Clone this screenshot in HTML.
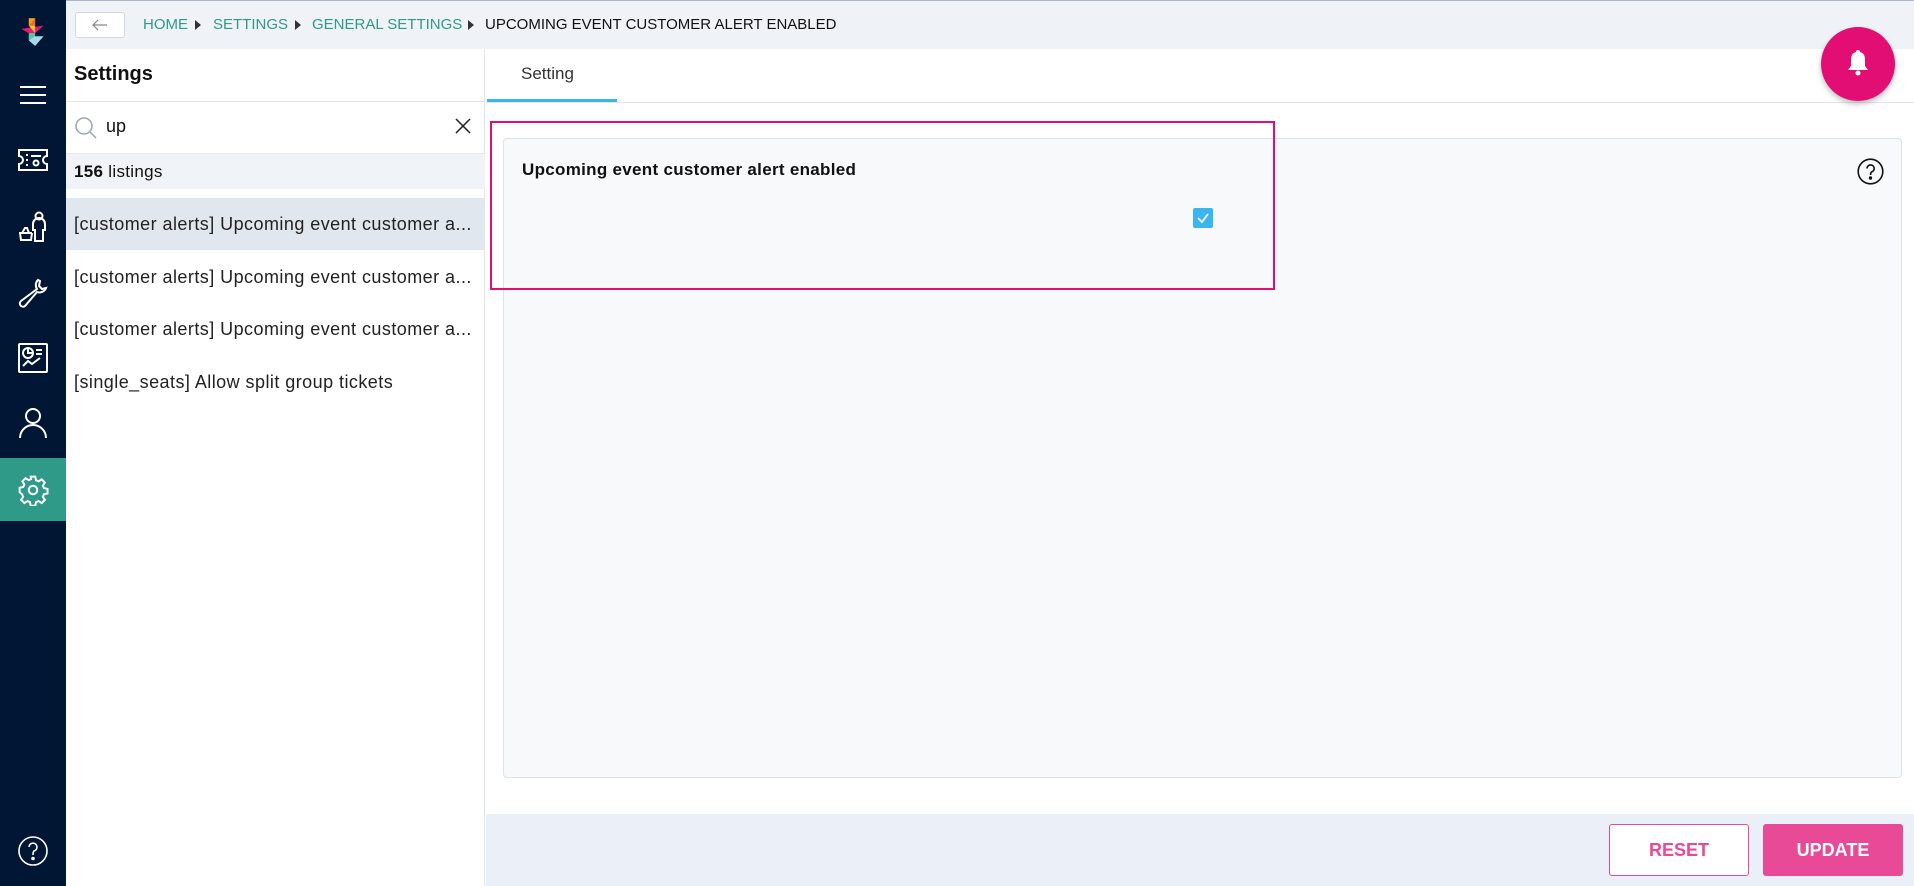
<!DOCTYPE html>
<html><head><meta charset="utf-8"><style>
*{box-sizing:border-box;margin:0;padding:0}
html,body{width:1914px;height:886px;overflow:hidden;background:#fff;font-family:"Liberation Sans",sans-serif;color:#111}
.abs{position:absolute}
#side{left:0;top:0;width:66px;height:886px;background:#011535}
#top{left:66px;top:0;width:1848px;height:49px;background:#eff3f8;border-top:1px solid #a9b6cc}
.crumb{font-size:15px;color:#2e9a87;top:15px}
#left{left:66px;top:49px;width:419px;height:837px;background:#fff;border-right:1px solid #e3e7ee}
.row{position:absolute;left:0;width:419px;height:52px;font-size:18px;letter-spacing:0.45px;line-height:52px;padding-left:8px;color:#222;white-space:nowrap}
svg{position:absolute}
</style></head><body>
<div id="side" class="abs">
<svg style="left:20px;top:15px" width="26" height="34" viewBox="0 0 24 32">
<polygon points="8,3 14,3 14,10 8,10" fill="#f7a21b"/><polygon points="14,3 14,10 8,10" fill="#f26b2a"/>
<polygon points="1,13 22,10 14,17 8,17" fill="#e8196f"/><polygon points="8,10 14,10 14,17" fill="#f7c02e"/>
<polygon points="8,17 14,17 14,24 8,24" fill="#5fc3a9"/><polygon points="14,20 22,20 14,29 8,24" fill="#a3d9e8"/>
</svg>
<svg style="left:19px;top:85px" width="28" height="20" viewBox="0 0 28 20" stroke="#fff" stroke-width="2"><path d="M1 2H27M1 10H27M1 18H27"/></svg>
<svg style="left:17px;top:148px" width="32" height="24" viewBox="0 0 32 24" fill="none" stroke="#fff" stroke-width="2"><path d="M2 2H30V8A4 4 0 0 0 30 16V22H2V16A4 4 0 0 0 2 8Z"/><path d="M10 6V8M10 11V13M10 16V18M14 8H24"/><circle cx="19" cy="15" r="2.5"/></svg>
<svg style="left:17px;top:211px" width="32" height="32" viewBox="0 0 32 32" fill="none" stroke="#fff" stroke-width="2"><circle cx="22" cy="5" r="3.5"/><path d="M16 19V13A6 6 0 0 1 28 13V19H26V30H18V19Z"/><path d="M2 22H15M3 22L4 29H14L15 22M5 22L8 17H10L12 22"/></svg>
<svg style="left:17px;top:277px" width="32" height="32" viewBox="0 0 32 32" fill="none" stroke="#fff" stroke-width="2"><path d="M21 3A7 7 0 0 0 20 12L4 24A3 3 0 0 0 8 29L20 15A7 7 0 0 0 29 11L25 12L22 9L23 4Z"/></svg>
<svg style="left:18px;top:343px" width="30" height="30" viewBox="0 0 30 30" fill="none" stroke="#fff" stroke-width="2"><rect x="1" y="1" width="28" height="28" rx="1"/><circle cx="10" cy="10" r="5"/><path d="M10 5V10H15M18 7H24M18 11H24M5 23L10 18L14 21L22 15"/></svg>
<svg style="left:18px;top:407px" width="30" height="32" viewBox="0 0 30 32" fill="none" stroke="#fff" stroke-width="2"><circle cx="15" cy="9" r="7"/><path d="M2 31A13 13 0 0 1 28 31"/></svg>
<div class="abs" style="left:0;top:458px;width:66px;height:63px;background:#2e9a87"></div>
<svg style="left:17px;top:474px" width="32" height="32" viewBox="0 0 24 24" fill="none" stroke="#fff" stroke-width="1.5"><circle cx="12" cy="12" r="3.2"/><path d="M10.3 2h3.4l.6 2.7 1.9.8 2.3-1.5 2.4 2.4-1.5 2.3.8 1.9 2.7.6v3.4l-2.7.6-.8 1.9 1.5 2.3-2.4 2.4-2.3-1.5-1.9.8-.6 2.7h-3.4l-.6-2.7-1.9-.8-2.3 1.5-2.4-2.4 1.5-2.3-.8-1.9L2 13.7v-3.4l2.7-.6.8-1.9L4 5.5l2.4-2.4 2.3 1.5 1.9-.8z"/></svg>
<svg style="left:18px;top:836px" width="30" height="30" viewBox="0 0 30 30" fill="none" stroke="#fff" stroke-width="1.6"><circle cx="15" cy="15" r="14"/><path d="M11 11A4 4 0 1 1 16 15C15 16 15 17 15 19"/><circle cx="15" cy="22.5" r="1" fill="#fff"/></svg>
</div>
<div id="top" class="abs">
<div class="abs" style="left:9px;top:11px;width:50px;height:26px;background:#fff;border:1px solid #d3d9e2;border-radius:3px"></div>
<svg style="left:26px;top:18px" width="16" height="12" viewBox="0 0 16 12" fill="none" stroke="#888" stroke-width="1.2"><path d="M15 6H1M6 1L1 6L6 11"/></svg>
<div class="abs crumb" style="left:77px">HOME</div>
<svg style="left:129px;top:19px" width="6" height="10"><path d="M0 0L6 5L0 10Z" fill="#333"/></svg>
<div class="abs crumb" style="left:147px">SETTINGS</div>
<svg style="left:229px;top:19px" width="6" height="10"><path d="M0 0L6 5L0 10Z" fill="#333"/></svg>
<div class="abs crumb" style="left:246px">GENERAL SETTINGS</div>
<svg style="left:402px;top:19px" width="6" height="10"><path d="M0 0L6 5L0 10Z" fill="#333"/></svg>
<div class="abs crumb" style="left:419px;color:#111">UPCOMING EVENT CUSTOMER ALERT ENABLED</div>
</div>
<div id="left" class="abs">
<div class="abs" style="left:8px;top:14px;font-size:20px;font-weight:bold">Settings</div>
<div class="abs" style="left:0;top:52px;width:419px;height:1px;background:#e3e7ee"></div>
<svg style="left:8px;top:67px" width="24" height="24" viewBox="0 0 24 24" fill="none" stroke="#9aa6b6" stroke-width="1.5"><circle cx="10" cy="10" r="8"/><path d="M16 16L22 22"/></svg>
<div class="abs" style="left:40px;top:67px;font-size:18px">up</div>
<svg style="left:389px;top:69px" width="16" height="16" viewBox="0 0 16 16" stroke="#222" stroke-width="1.5"><path d="M1 1L15 15M15 1L1 15"/></svg>
<div class="abs" style="left:0;top:104px;width:419px;height:36px;background:#f0f3f7;border-top:1px solid #e3e7ee;font-size:17px;letter-spacing:0.3px;line-height:36px;padding-left:8px"><b>156</b> listings</div>
<div class="row" style="top:149px;background:#e1e7ef">[customer alerts] Upcoming event customer a...</div>
<div class="row" style="top:202px">[customer alerts] Upcoming event customer a...</div>
<div class="row" style="top:254px">[customer alerts] Upcoming event customer a...</div>
<div class="row" style="top:307px">[single_seats] Allow split group tickets</div>
</div>
<div class="abs" style="left:486px;top:102px;width:1428px;height:1px;background:#e3e7ee"></div>
<div class="abs" style="left:521px;top:64px;font-size:17px;color:#333">Setting</div>
<div class="abs" style="left:487px;top:99px;width:130px;height:3px;background:#3bb5ee"></div>
<div class="abs" style="left:503px;top:138px;width:1399px;height:640px;background:#f8f9fb;border:1px solid #dde3ea;border-radius:4px"></div>
<div class="abs" style="left:490px;top:121px;width:785px;height:169px;border:2.5px solid #e20e73"></div>
<div class="abs" style="left:522px;top:160px;font-size:17px;letter-spacing:0.3px;font-weight:bold;color:#111">Upcoming event customer alert enabled</div>
<div class="abs" style="left:1193px;top:208px;width:20px;height:20px;background:#3bb5ee;border-radius:2px"></div>
<svg style="left:1196px;top:211px" width="14" height="14" viewBox="0 0 14 14" fill="none" stroke="#fff" stroke-width="1.8"><path d="M2 7L6 11L12 3"/></svg>
<svg style="left:1857px;top:158px" width="27" height="27" viewBox="0 0 27 27" fill="none" stroke="#111" stroke-width="1.6"><circle cx="13.5" cy="13.5" r="12.3"/><path d="M10 10.5A3.6 3.6 0 1 1 14.5 14C13.8 14.7 13.5 15.5 13.5 17"/><circle cx="13.5" cy="20" r="0.9" fill="#111"/></svg>
<div class="abs" style="left:1821px;top:27px;width:74px;height:74px;border-radius:50%;background:#e20e73;box-shadow:0 3px 6px rgba(0,0,0,.25)"></div>
<svg style="left:1845px;top:49px" width="26" height="28" viewBox="0 0 26 28" fill="#fff"><path d="M13 1C11.5 1 11 2 11 3C7 4 6 7 6 11V17L3 21H23L20 17V11C20 7 19 4 15 3C15 2 14.5 1 13 1Z"/><circle cx="13" cy="24" r="2.5"/></svg>
<div class="abs" style="left:486px;top:814px;width:1428px;height:72px;background:#ebeff7"></div>
<div class="abs" style="left:1609px;top:824px;width:140px;height:52px;background:#fff;border:1px solid #e94a97;border-radius:3px;color:#e94a97;font-weight:bold;font-size:18px;text-align:center;line-height:50px">RESET</div>
<div class="abs" style="left:1763px;top:824px;width:140px;height:52px;background:#e94a97;border-radius:3px;color:#fff;font-weight:bold;font-size:18px;text-align:center;line-height:52px">UPDATE</div>
</body></html>
